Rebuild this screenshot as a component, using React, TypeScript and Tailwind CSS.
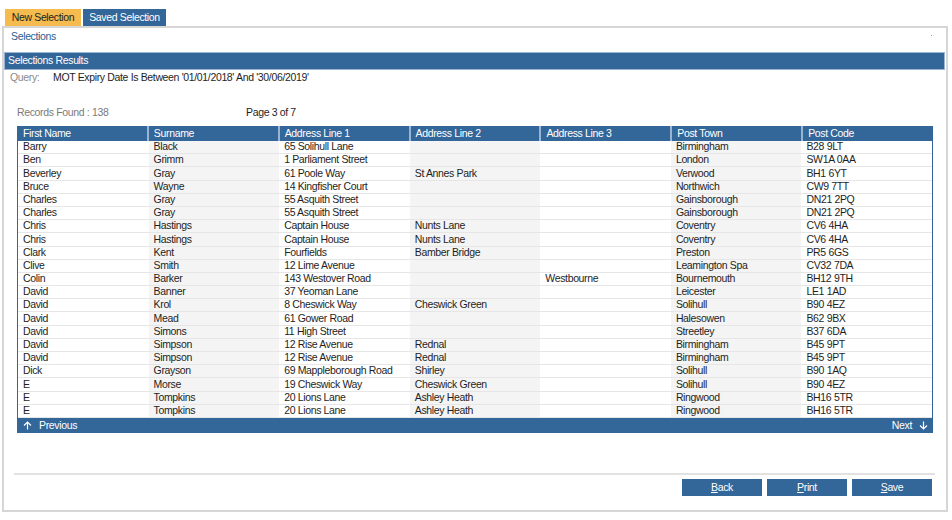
import React from "react";

const rows: string[][] = [
  ["Barry", "Black", "65 Solihull Lane", "", "", "Birmingham", "B28 9LT"],
  ["Ben", "Grimm", "1 Parliament Street", "", "", "London", "SW1A 0AA"],
  ["Beverley", "Gray", "61 Poole Way", "St Annes Park", "", "Verwood", "BH1 6YT"],
  ["Bruce", "Wayne", "14 Kingfisher Court", "", "", "Northwich", "CW9 7TT"],
  ["Charles", "Gray", "55 Asquith Street", "", "", "Gainsborough", "DN21 2PQ"],
  ["Charles", "Gray", "55 Asquith Street", "", "", "Gainsborough", "DN21 2PQ"],
  ["Chris", "Hastings", "Captain House", "Nunts Lane", "", "Coventry", "CV6 4HA"],
  ["Chris", "Hastings", "Captain House", "Nunts Lane", "", "Coventry", "CV6 4HA"],
  ["Clark", "Kent", "Fourfields", "Bamber Bridge", "", "Preston", "PR5 6GS"],
  ["Clive", "Smith", "12 Lime Avenue", "", "", "Leamington Spa", "CV32 7DA"],
  ["Colin", "Barker", "143 Westover Road", "", "Westbourne", "Bournemouth", "BH12 9TH"],
  ["David", "Banner", "37 Yeoman Lane", "", "", "Leicester", "LE1 1AD"],
  ["David", "Krol", "8 Cheswick Way", "Cheswick Green", "", "Solihull", "B90 4EZ"],
  ["David", "Mead", "61 Gower Road", "", "", "Halesowen", "B62 9BX"],
  ["David", "Simons", "11 High Street", "", "", "Streetley", "B37 6DA"],
  ["David", "Simpson", "12 Rise Avenue", "Rednal", "", "Birmingham", "B45 9PT"],
  ["David", "Simpson", "12 Rise Avenue", "Rednal", "", "Birmingham", "B45 9PT"],
  ["Dick", "Grayson", "69 Mappleborough Road", "Shirley", "", "Solihull", "B90 1AQ"],
  ["E", "Morse", "19 Cheswick Way", "Cheswick Green", "", "Solihull", "B90 4EZ"],
  ["E", "Tompkins", "20 Lions Lane", "Ashley Heath", "", "Ringwood", "BH16 5TR"],
  ["E", "Tompkins", "20 Lions Lane", "Ashley Heath", "", "Ringwood", "BH16 5TR"],
];

const headers = ["First Name", "Surname", "Address Line 1", "Address Line 2", "Address Line 3", "Post Town", "Post Code"];

export default function App() {
  return (
    <div
      className="w-[952px] h-[520px] bg-white text-[10.5px] tracking-[-0.35px] text-[#1e1e1e] overflow-hidden"
      style={{ fontFamily: "'Liberation Sans', Arial, sans-serif" }}
    >
      <div className="pt-[9px] pl-[5px] flex gap-[2px] h-[26px]">
        <div className="w-[76px] h-[17px] bg-[#f6bb4e] text-[#222] flex items-center justify-center pt-[1px]">New Selection</div>
        <div className="w-[83px] h-[17px] bg-[#336699] text-white flex items-center justify-center">Saved Selection</div>
      </div>
      <div className="ml-[2px] w-[946px] h-[486px] border-2 border-[#d6d6d6] flex flex-col">
        <div className="h-[16px] mt-[1px] flex items-center justify-between pl-[7px] pr-[14px]">
          <span className="text-[#2a5d90]">Selections</span>
          <span className="w-[1px] h-[1px] bg-[#999] mb-[4px]" />
        </div>
        <div className="h-[18px] mt-[7px] bg-[#336699] border border-[#9ab5d3] text-white flex items-center pl-[3px] mr-[1px]">
          Selections Results
        </div>
        <div className="h-[14px] mt-[1px] flex items-center pl-[6px]">
          <span className="text-[#8a8a8a] w-[43px]">Query:</span>
          <span>MOT Expiry Date Is Between '01/01/2018' And '30/06/2019'</span>
        </div>
        <div className="h-[14px] mt-[21px] flex items-center pl-[13px]">
          <span className="text-[#7a7a7a] w-[229px]">Records Found : 138</span>
          <span>Page 3 of 7</span>
        </div>
        <div className="mt-[6px] ml-[13px] w-[916px] border-l border-r border-[#336699] flex flex-col">
          <div className="h-[15px] bg-[#336699] flex text-white">
            {headers.map((h, i) => (
              <div
                key={h}
                className={`flex-1 flex items-center pl-[5px] ${i > 0 ? "border-l-2 border-[#9ab5d3]" : ""}`}
              >
                {h}
              </div>
            ))}
          </div>
          {rows.map((r, ri) => (
            <div key={ri} className="h-[13.2px] flex border-b border-[#e6e6e6]">
              {r.map((c, ci) => (
                <div
                  key={ci}
                  className={`flex-1 flex items-center pl-[5px] whitespace-nowrap overflow-hidden ${ci % 2 === 1 ? "bg-[#f4f4f4]" : "bg-white"}`}
                >
                  {c}
                </div>
              ))}
            </div>
          ))}
          <div className="h-[15px] bg-[#336699] text-white flex items-center justify-between pl-[5px] pr-[4px]">
            <span className="flex items-center gap-[7px]">
              <svg width="9" height="9" viewBox="0 0 9 9" fill="none" stroke="white" strokeWidth="1.2">
                <path d="M4.5 8.5V1M1 4.5L4.5 1L8 4.5" />
              </svg>
              Previous
            </span>
            <span className="flex items-center gap-[7px]">
              Next
              <svg width="9" height="9" viewBox="0 0 9 9" fill="none" stroke="white" strokeWidth="1.2">
                <path d="M4.5 0.5V8M1 4.5L4.5 8L8 4.5" />
              </svg>
            </span>
          </div>
        </div>
        <div className="flex-1" />
        <div className="ml-[10px] mr-[11px] h-[2px] bg-[#e2e2e2]" />
        <div className="flex justify-end gap-[5px] pr-[14px] pt-[4px] pb-[14px]">
          {["Back", "Print", "Save"].map((b) => (
            <div key={b} className="w-[80px] h-[17px] bg-[#336699] text-white flex items-center justify-center">
              <span>
                <span className="underline">{b[0]}</span>
                {b.slice(1)}
              </span>
            </div>
          ))}
        </div>
      </div>
    </div>
  );
}
